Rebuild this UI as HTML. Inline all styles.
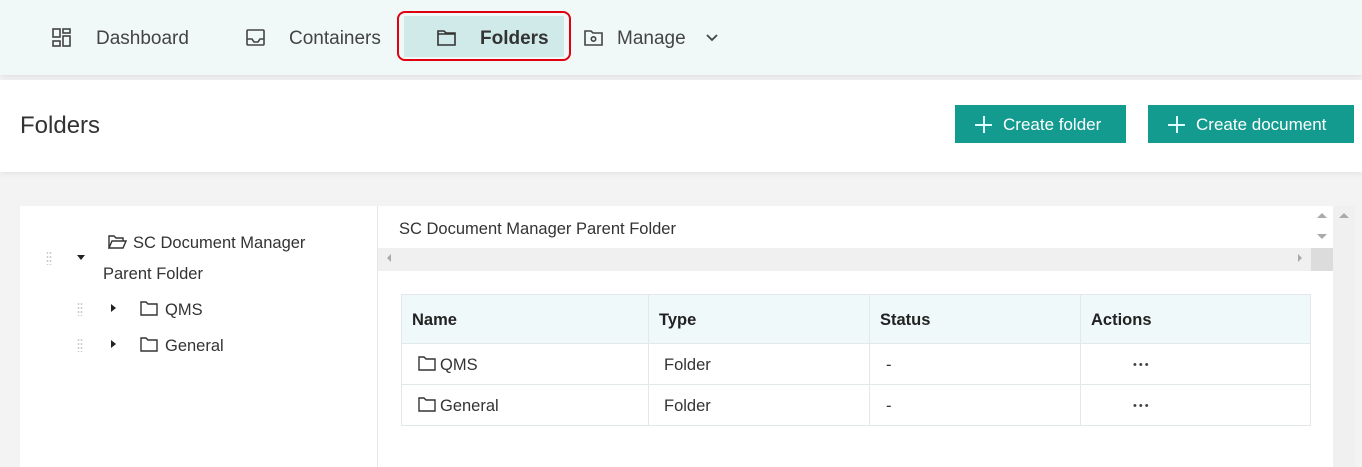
<!DOCTYPE html>
<html><head><style>
*{margin:0;padding:0;box-sizing:border-box}
body{width:1362px;height:467px;background:#f3f3f3;font-family:"Liberation Sans",sans-serif;color:#333;position:relative;overflow:hidden}
.abs{position:absolute}
.nav{left:0;top:0;width:1362px;height:75px;background:#f0f9f8;box-shadow:0 2px 5px rgba(0,0,0,.08)}
.ni{position:absolute;top:28px;font-size:19px;color:#444;white-space:nowrap}
.hdr{left:0;top:80px;width:1362px;height:92px;background:#fff;box-shadow:0 2px 5px rgba(0,0,0,.06)}
.btn{position:absolute;top:105px;height:38px;background:#139b8f;color:#fff;font-size:17px;line-height:40px;padding-left:48px}
.btn:before{content:"";position:absolute;left:20px;top:19px;width:17px;height:1.5px;background:#dff}
.btn:after{content:"";position:absolute;left:28px;top:11px;width:1.5px;height:17px;background:#dff}
.t16{font-size:16.5px;color:#333;white-space:nowrap}
table{border-collapse:collapse;position:absolute;left:401px;top:294px;width:910px;font-size:16.5px}
td,th{border:1.5px solid #e3e8ea;text-align:left;font-weight:normal;padding-left:10px}
th{height:49px;background:#f0f9f9;color:#222;font-weight:600;padding-top:2px}
td{height:41px;padding-top:2px}
.dots{padding-left:52px;font-size:11px;letter-spacing:2px;color:#444}
.grip{position:absolute;width:6px;height:14px;background-image:radial-gradient(circle,#ccc 0.8px,transparent 1px);background-size:3px 4px}
svg.fi{vertical-align:-1px;margin-left:6px;margin-right:3px}
</style></head><body>
<div class="abs nav"></div>
<svg class="abs" style="left:52px;top:28px" width="20" height="20" viewBox="0 0 20 20" fill="none" stroke="#444" stroke-width="1.6"><rect x="1" y="1" width="7" height="8"/><rect x="11" y="1" width="7" height="4"/><rect x="1" y="13" width="7" height="5"/><rect x="11" y="8" width="7" height="10"/></svg>
<div class="ni" style="left:96px">Dashboard</div>
<svg class="abs" style="left:246px;top:29px" width="20" height="18" viewBox="0 0 20 18" fill="none" stroke="#444" stroke-width="1.6"><rect x="1" y="1" width="17" height="15" rx="1"/><path d="M1 10h5l2 3h4l2-3h4"/></svg>
<div class="ni" style="left:289px">Containers</div>
<div class="abs" style="left:397px;top:11px;width:174px;height:50px;border:2px solid #e0000f;border-radius:8px"></div>
<div class="abs" style="left:404px;top:16px;width:160px;height:41px;background:#cfeae8"></div>
<svg class="abs" style="left:437px;top:29px" width="20" height="18" viewBox="0 0 20 18" fill="none" stroke="#333" stroke-width="1.6"><path d="M1 2h6l2 2h9v12H1z"/><path d="M1 5h17"/></svg>
<div class="ni" style="left:480px;font-weight:bold;color:#333">Folders</div>
<svg class="abs" style="left:584px;top:29px" width="20" height="18" viewBox="0 0 20 18" fill="none" stroke="#444" stroke-width="1.6"><path d="M1 2h6l2 2h9v12H1z"/><circle cx="9.5" cy="10" r="2.2"/></svg>
<div class="ni" style="left:617px">Manage</div>
<svg class="abs" style="left:705px;top:33px" width="14" height="10" viewBox="0 0 14 10" fill="none" stroke="#444" stroke-width="1.8"><path d="M2 2l5 5 5-5"/></svg>

<div class="abs hdr"></div>
<div class="abs" style="left:20px;top:112px;font-size:24px;color:#333">Folders</div>
<div class="btn" style="left:955px;width:171px">Create folder</div>
<div class="btn" style="left:1148px;width:206px">Create document</div>

<div class="abs" style="left:20px;top:206px;width:1313px;height:261px;background:#fff"></div>
<div class="abs" style="left:377px;top:206px;width:1px;height:261px;background:#e6e6e6"></div>
<div class="abs" style="left:1333px;top:206px;width:22px;height:261px;background:#f0f0f0"></div>
<div class="abs" style="left:378px;top:248px;width:933px;height:23px;background:#f0f0f0"></div>
<div class="abs" style="left:1311px;top:248px;width:22px;height:23px;background:#dcdcdc"></div>
<div class="abs" style="left:387px;top:254px;border:4px solid transparent;border-right-color:#aaa;border-left:0;height:0"></div>
<div class="abs" style="left:1298px;top:254px;border:4px solid transparent;border-left-color:#aaa;border-right:0"></div>
<div class="abs" style="left:1317px;top:213px;border:5px solid transparent;border-bottom-color:#aaa;border-top:0"></div>
<div class="abs" style="left:1339px;top:213px;border:5px solid transparent;border-bottom-color:#aaa;border-top:0"></div>
<div class="abs" style="left:1317px;top:234px;border:5px solid transparent;border-top-color:#aaa;border-bottom:0"></div>

<div class="grip" style="left:46px;top:251px"></div>
<div class="abs" style="left:77px;top:255px;border:4.5px solid transparent;border-top:5px solid #222;border-bottom:0"></div>
<svg class="abs" style="left:108px;top:235px" width="19" height="15" viewBox="0 0 19 15" fill="none" stroke="#333" stroke-width="1.4"><path d="M1 13V1h5l2 2h7v3"/><path d="M1 13l3-7h14l-3 7z"/></svg>
<div class="abs t16" style="left:133px;top:234px">SC Document Manager</div>
<div class="abs t16" style="left:103px;top:265px">Parent Folder</div>
<div class="grip" style="left:77px;top:302px"></div>
<div class="abs" style="left:111px;top:304px;border:4.5px solid transparent;border-left:5px solid #222;border-right:0"></div>
<svg class="abs" style="left:140px;top:301px" width="19" height="15" viewBox="0 0 19 15" fill="none" stroke="#333" stroke-width="1.4"><path d="M1 1h5l2 2h9v11H1z"/></svg>
<div class="abs t16" style="left:165px;top:301px">QMS</div>
<div class="grip" style="left:77px;top:338px"></div>
<div class="abs" style="left:111px;top:340px;border:4.5px solid transparent;border-left:5px solid #222;border-right:0"></div>
<svg class="abs" style="left:140px;top:337px" width="19" height="15" viewBox="0 0 19 15" fill="none" stroke="#333" stroke-width="1.4"><path d="M1 1h5l2 2h9v11H1z"/></svg>
<div class="abs t16" style="left:165px;top:337px">General</div>

<div class="abs t16" style="left:399px;top:220px">SC Document Manager Parent Folder</div>
<table>
<tr><th style="width:247px">Name</th><th style="width:221px">Type</th><th style="width:211px">Status</th><th>Actions</th></tr>
<tr><td><svg class="fi" width="19" height="15" viewBox="0 0 19 15" fill="none" stroke="#333" stroke-width="1.4"><path d="M1 1h5l2 2h9v11H1z"/></svg>QMS</td><td style="padding-left:15px">Folder</td><td style="padding-left:16px">-</td><td class="dots">•••</td></tr>
<tr><td><svg class="fi" width="19" height="15" viewBox="0 0 19 15" fill="none" stroke="#333" stroke-width="1.4"><path d="M1 1h5l2 2h9v11H1z"/></svg>General</td><td style="padding-left:15px">Folder</td><td style="padding-left:16px">-</td><td class="dots">•••</td></tr>
</table>
</body></html>
